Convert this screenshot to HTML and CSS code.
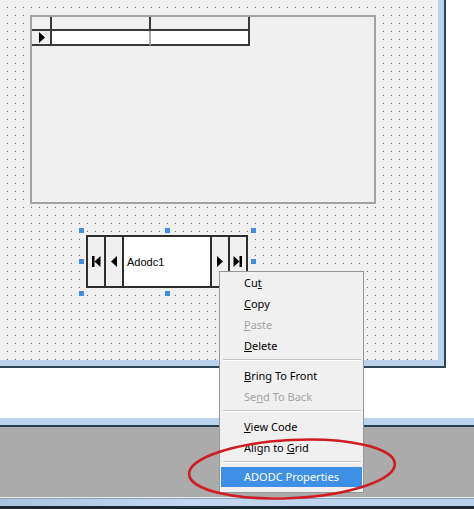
FILE: index.html
```html
<!DOCTYPE html>
<html>
<head>
<meta charset="utf-8">
<link rel="stylesheet" href="styles.css">
</head>
<body>
<div class="screen">
  <div class="workspace">
    <div class="frame">
      <div class="form">
        <div class="datagrid">
          <div class="dg-table">
            <div class="cell sel hdr"></div>
            <div class="cell hdr"></div>
            <div class="cell hdr last"></div>
            <div class="cell sel row">
              <svg width="6" height="11" viewBox="0 0 6 11"><path d="M0 0 L6 5.5 L0 11 Z" fill="#000"/></svg>
            </div>
            <div class="cell data mid"></div>
            <div class="cell data last"></div>
          </div>
        </div>

        <div class="adodc">
          <div class="nav-btn">
            <svg width="10" height="11" viewBox="0 0 10 11"><rect x="1" y="0" width="2.5" height="11" fill="#000"/><path d="M9.5 0 L3.5 5.5 L9.5 11 Z" fill="#000"/></svg>
          </div>
          <div class="nav-btn">
            <svg width="6" height="11" viewBox="0 0 6 11"><path d="M6 0 L0 5.5 L6 11 Z" fill="#000"/></svg>
          </div>
          <div class="caption">Adodc1</div>
          <div class="nav-btn">
            <svg width="6" height="11" viewBox="0 0 6 11"><path d="M0 0 L6 5.5 L0 11 Z" fill="#000"/></svg>
          </div>
          <div class="nav-btn end">
            <svg width="10" height="11" viewBox="0 0 10 11"><path d="M0.5 0 L6.5 5.5 L0.5 11 Z" fill="#000"/><rect x="6.5" y="0" width="2.5" height="11" fill="#000"/></svg>
          </div>
        </div>

        <span class="handle h-tl"></span>
        <span class="handle h-tm"></span>
        <span class="handle h-tr"></span>
        <span class="handle h-ml"></span>
        <span class="handle h-mr"></span>
        <span class="handle h-bl"></span>
        <span class="handle h-bm"></span>
      </div>
    </div>
  </div>
  <div class="band"></div>
  <div class="graypane"></div>
  <div class="bottom">
    <div class="b-white"></div>
    <div class="b-line"></div>
    <div class="b-blue"></div>
    <div class="b-dark"></div>
  </div>

  <div class="menu">
    <div class="item">Cu<u>t</u></div>
    <div class="item"><u>C</u>opy</div>
    <div class="item disabled"><u>P</u>aste</div>
    <div class="item"><u>D</u>elete</div>
    <div class="sep"></div>
    <div class="item"><u>B</u>ring To Front</div>
    <div class="item disabled">Se<u>n</u>d To Back</div>
    <div class="sep"></div>
    <div class="item"><u>V</u>iew Code</div>
    <div class="item">Align to <u>G</u>rid</div>
    <div class="sep"></div>
    <div class="item active">ADODC Properties</div>
  </div>

  <svg class="annot" width="220" height="72" viewBox="0 0 220 72">
    <ellipse cx="107" cy="35" rx="103" ry="29" transform="rotate(-3 107 35)" fill="none" stroke="#d01c24" stroke-width="2.6"/>
  </svg>
</div>
</body>
</html>
```

FILE: styles.css
```css
html, body {
  margin: 0;
  padding: 0;
  background: #ffffff;
  overflow: hidden;
}

.screen {
  position: relative;
  width: 474px;
  height: 509px;
  overflow: hidden;
  font-family: "Noto Sans", "Liberation Sans", sans-serif;
}

.workspace {
  height: 418px;
  background: #ffffff;
}

.frame {
  width: 444px;
  border-right: 2px solid #2b4756;
  border-bottom: 2px solid #2b4756;
}

.form {
  position: relative;
  width: 438px;
  height: 360px;
  border-right: 6px solid #bad2ec;
  border-bottom: 6px solid #bad2ec;
  background-color: #f0f0f0;
  background-image:
    linear-gradient(to bottom, transparent 1px, #f0f0f0 1px),
    linear-gradient(to right, #666666 1px, #f0f0f0 1px);
  background-size: 8px 8px, 8px 8px;
  background-position: 7px 7px, 7px 7px;
}

/* DataGrid control */
.datagrid {
  position: absolute;
  left: 30px;
  top: 15px;
  width: 342px;
  height: 185px;
  border: 2px solid #a2a2a2;
  background: #f0f0f0;
}

.dg-table {
  display: grid;
  grid-template-columns: 20px 99px 99px;
  grid-template-rows: 14px 15px;
  width: 218px;
}

.cell {
  box-sizing: border-box;
  border-right: 2px solid #3a3a3a;
  border-bottom: 2px solid #3a3a3a;
}

.cell.hdr {
  background: #f0f0f0;
}

.cell.data {
  background: #ffffff;
}

.cell.data.mid {
  border-right-color: #a9a9a9;
}

.cell.row {
  display: flex;
  align-items: center;
  justify-content: center;
  background: #f0f0f0;
}

.cell.row svg {
  display: block;
  margin-left: 1px;
}

/* ADODC control */
.adodc {
  position: absolute;
  left: 86px;
  top: 235px;
  width: 158px;
  height: 49px;
  border: 2px solid #2e2e2e;
  display: flex;
  background: #f0f0f0;
}

.nav-btn {
  width: 16px;
  border-right: 2px solid #2e2e2e;
  display: flex;
  align-items: center;
  justify-content: center;
  background: #f0f0f0;
}

.nav-btn.end {
  border-right: none;
}

.nav-btn svg {
  display: block;
}

.caption {
  width: 83px;
  padding-left: 3px;
  border-right: 2px solid #2e2e2e;
  background: #ffffff;
  display: flex;
  align-items: center;
  font-family: "Liberation Sans", "Noto Sans", sans-serif;
  font-size: 11px;
  color: #000;
}

/* selection handles */
.handle {
  position: absolute;
  width: 5px;
  height: 5px;
  background: #3d8fe8;
}

.h-tl { left: 79px; top: 228px; }
.h-tm { left: 165px; top: 228px; }
.h-tr { left: 251px; top: 228px; }
.h-ml { left: 79px; top: 259px; }
.h-mr { left: 251px; top: 259px; }
.h-bl { left: 79px; top: 291px; }
.h-bm { left: 165px; top: 291px; }

/* lower panes */
.band {
  height: 7px;
  background: #bad2ec;
  border-bottom: 2px solid #24404e;
}

.graypane {
  height: 70px;
  background: #ababab;
}

.b-white {
  height: 1px;
  background: #ececec;
}

.b-line {
  height: 1px;
  background: #8aa0b8;
}

.b-blue {
  height: 7px;
  background: linear-gradient(to right, #a9c3e2 0%, #c4d8ef 40%, #b8cfea 100%);
}

.b-dark {
  height: 4px;
  background: #1b2733;
}

/* context menu */
.menu {
  position: absolute;
  left: 219px;
  top: 271px;
  width: 141px;
  padding: 0 1px 5px 1px;
  border: 1px solid #979797;
  background: #f0f0f0;
  font-size: 11px;
  color: #000;
}

.item {
  height: 21px;
  line-height: 21px;
  padding-left: 23px;
  white-space: nowrap;
}

.item u {
  text-decoration: underline;
  text-underline-offset: 1px;
}

.item.disabled {
  color: #a3a3a3;
}

.item.active {
  height: 20px;
  line-height: 20px;
  background: #3d90e6;
  color: #ffffff;
}

.sep {
  margin: 3px 1px 4px 2px;
  height: 0;
  border-top: 1px solid #c6c6c6;
  border-bottom: 1px solid #ffffff;
}

/* annotation */
.annot {
  position: absolute;
  left: 185px;
  top: 434px;
}
```
